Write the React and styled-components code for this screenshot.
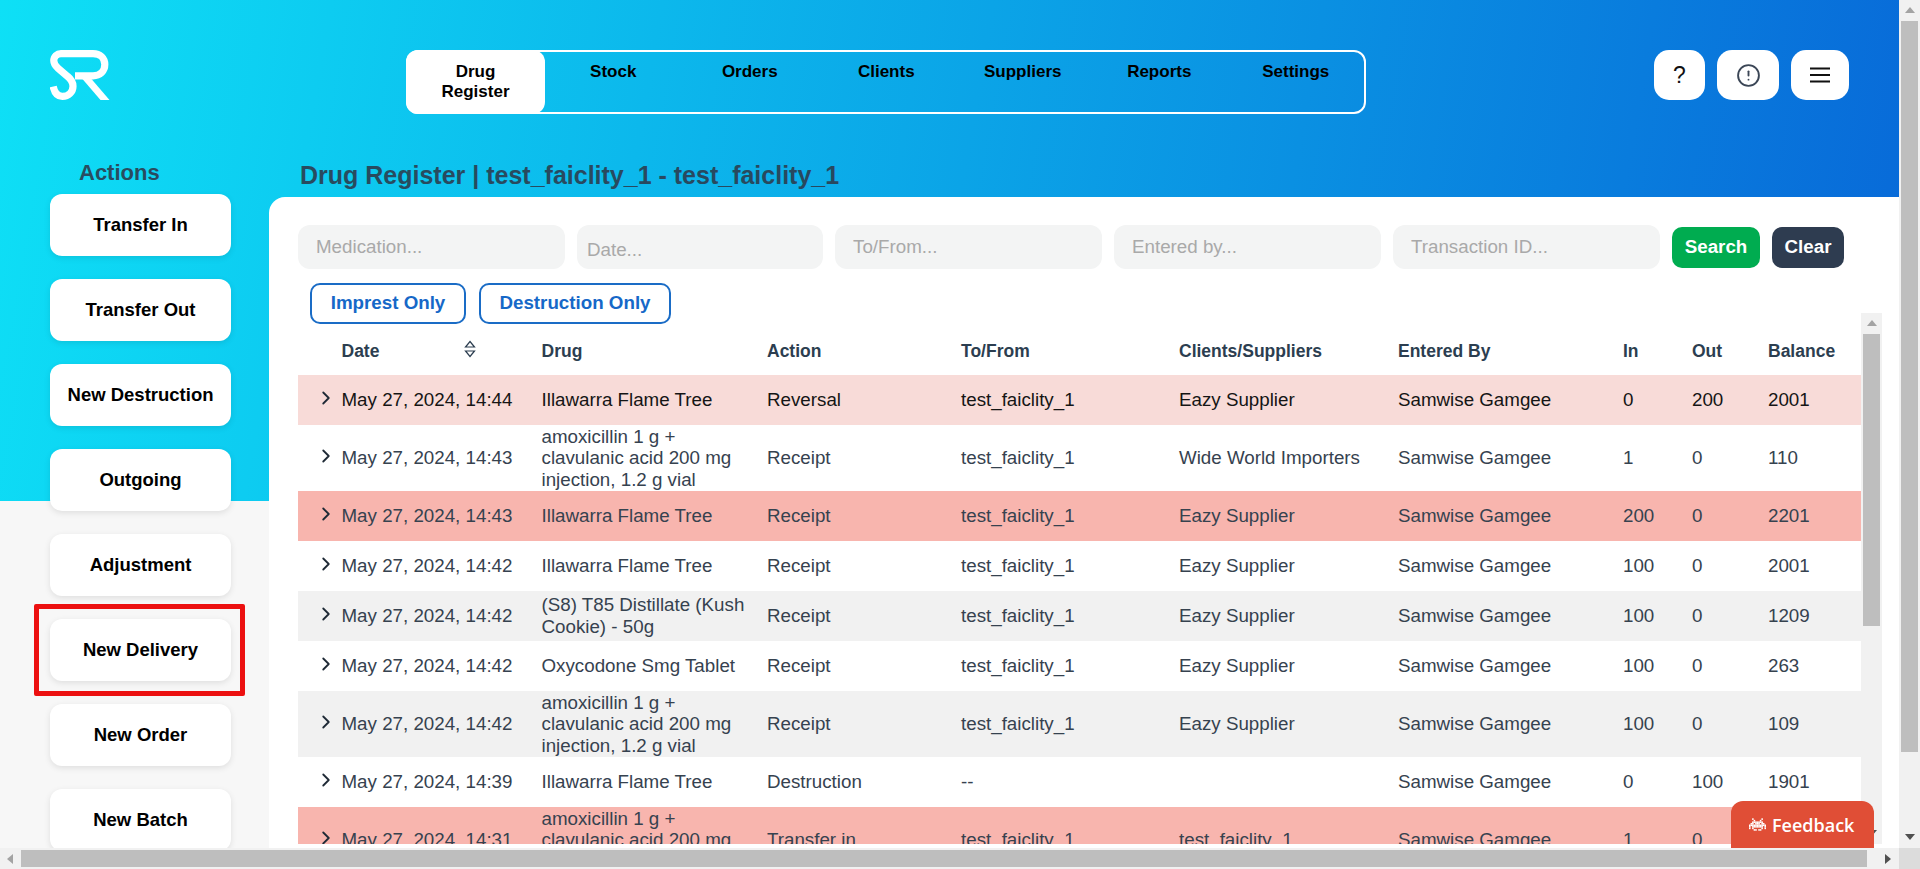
import React from 'react';
import styled, { createGlobalStyle } from 'styled-components';
import { ChevronRight, CircleAlert } from 'lucide-react';

const GlobalStyle = createGlobalStyle`
  html, body {
    margin: 0;
    height: 100%;
    overflow: hidden;
  }
  * {
    box-sizing: border-box;
  }
  body {
    font-family: "Liberation Sans", Arial, sans-serif;
  }
`;

const NAV_ITEMS = ['Drug Register', 'Stock', 'Orders', 'Clients', 'Suppliers', 'Reports', 'Settings'];

const ACTIONS = [
  'Transfer In',
  'Transfer Out',
  'New Destruction',
  'Outgoing',
  'Adjustment',
  'New Delivery',
  'New Order',
  'New Batch',
];

const AMOX = 'amoxicillin 1 g + clavulanic acid 200 mg injection, 1.2 g vial';
const FACILITY = 'test_faiclity_1';
const USER = 'Samwise Gamgee';

const ROWS = [
  ['soft', 'May 27, 2024, 14:44', 'Illawarra Flame Tree', 'Reversal', FACILITY, 'Eazy Supplier', USER, '0', '200', '2001'],
  ['plain', 'May 27, 2024, 14:43', AMOX, 'Receipt', FACILITY, 'Wide World Importers', USER, '1', '0', '110'],
  ['strong', 'May 27, 2024, 14:43', 'Illawarra Flame Tree', 'Receipt', FACILITY, 'Eazy Supplier', USER, '200', '0', '2201'],
  ['plain', 'May 27, 2024, 14:42', 'Illawarra Flame Tree', 'Receipt', FACILITY, 'Eazy Supplier', USER, '100', '0', '2001'],
  ['grey', 'May 27, 2024, 14:42', '(S8) T85 Distillate (Kush Cookie) - 50g', 'Receipt', FACILITY, 'Eazy Supplier', USER, '100', '0', '1209'],
  ['plain', 'May 27, 2024, 14:42', 'Oxycodone Smg Tablet', 'Receipt', FACILITY, 'Eazy Supplier', USER, '100', '0', '263'],
  ['grey', 'May 27, 2024, 14:42', AMOX, 'Receipt', FACILITY, 'Eazy Supplier', USER, '100', '0', '109'],
  ['plain', 'May 27, 2024, 14:39', 'Illawarra Flame Tree', 'Destruction', '--', '', USER, '0', '100', '1901'],
  ['strong', 'May 27, 2024, 14:31', AMOX, 'Transfer in', FACILITY, FACILITY, USER, '1', '0', '1801'],
];

const ROW_COLORS = {
  soft: '#f8dbd8',
  strong: '#f8b5ae',
  grey: '#f1f1f1',
  plain: '#ffffff',
};

const COLUMNS = '43.5px 200px 225.5px 194px 218px 219px 225px 69px 76px 93px';

const INVADER = [
  '..X.....X..',
  '...X...X...',
  '..XXXXXXX..',
  '.XX.XXX.XX.',
  'XXXXXXXXXXX',
  'X.XXXXXXX.X',
  'X.X.....X.X',
  '...XX.XX...',
];

const Logo = () => (
  <LogoMark viewBox="0 0 60 50" aria-label="SR">
    <path
      d="M3.2 36.6C4.6 43 8 46.4 12.3 46.4C18.6 46.4 23 42 23 36.3C23 32.3 21.2 29.3 17.6 26.4L8 18.2C5 15.6 3.8 13.2 3.8 10.8C3.8 6.4 7 3.6 11 3.6H43C50 3.6 54.8 8 54.8 14.6C54.8 21.2 50 25.8 43 25.8H25"
      fill="none"
      stroke="#fff"
      strokeWidth="7.2"
    />
    <path d="M29 25L38 25L59.5 50L50.5 50Z" fill="#fff" />
  </LogoMark>
);

const SortIcon = () => (
  <SortMark viewBox="0 0 14 18">
    <path d="M7 1.5L11.5 7H2.5Z" fill="none" stroke="#2c3e50" strokeWidth="1.2" />
    <path d="M7 16.5L11.5 11H2.5Z" fill="none" stroke="#2c3e50" strokeWidth="1.2" />
  </SortMark>
);

const MenuIcon = () => (
  <svg width="22" height="20" viewBox="0 0 22 20">
    <path d="M1 3.5H21M1 10H21M1 16.5H21" stroke="#111" strokeWidth="2.2" />
  </svg>
);

const InvaderIcon = () => (
  <InvaderMark viewBox="0 0 11 8">
    {INVADER.map((line, y) =>
      line.split('').map((cell, x) =>
        cell === 'X' ? <rect key={`${x}-${y}`} x={x} y={y} width="1.02" height="1.02" fill="#fff" /> : null
      )
    )}
  </InvaderMark>
);

const Arrow = ({ dir, color }) => {
  const points = {
    up: '0,7 5,1 10,7',
    down: '0,1 5,7 10,1',
    left: '7,0 1,5 7,10',
    right: '1,0 7,5 1,10',
  };
  return (
    <svg width="10" height="10" viewBox="0 0 10 10">
      <polygon points={points[dir]} fill={color} />
    </svg>
  );
};

const App = () => {
  return (
    <Page>
      <GlobalStyle />
      <Viewport>
        <Header>
          <LogoSlot>
            <Logo />
          </LogoSlot>
          <Nav>
            {NAV_ITEMS.map((item, idx) => (
              <NavItem key={item} $active={idx === 0}>
                {item}
              </NavItem>
            ))}
          </Nav>
          <HeaderButtons>
            <HeaderButton $width={51}>
              <QuestionMark>?</QuestionMark>
            </HeaderButton>
            <HeaderButton $width={62}>
              <CircleAlert size={25} color="#3b4656" strokeWidth={1.8} />
            </HeaderButton>
            <HeaderButton $width={58}>
              <MenuIcon />
            </HeaderButton>
          </HeaderButtons>
        </Header>

        <Body>
          <Sidebar>
            <SideTitle>Actions</SideTitle>
            {ACTIONS.map(action => (
              <ActionButton key={action} $marked={action === 'New Delivery'}>
                {action}
              </ActionButton>
            ))}
          </Sidebar>

          <Main>
            <PageTitle>Drug Register | test_faiclity_1 - test_faiclity_1</PageTitle>
            <Panel>
              <SearchRow>
                <SearchInput $width={267} placeholder="Medication..." />
                <DateInput placeholder="Date..." />
                <SearchInput $width={267} placeholder="To/From..." />
                <SearchInput $width={267} placeholder="Entered by..." />
                <SearchInput $width={267} placeholder="Transaction ID..." />
                <SolidButton $bg="#00ac50" $width={88}>
                  Search
                </SolidButton>
                <SolidButton $bg="#2e3c50" $width={72}>
                  Clear
                </SolidButton>
              </SearchRow>

              <ToggleRow>
                <OutlineButton $width={156}>Imprest Only</OutlineButton>
                <OutlineButton $width={192}>Destruction Only</OutlineButton>
              </ToggleRow>

              <TableArea>
                <Table>
                  <HeadRow>
                    <span />
                    <DateHead>
                      Date
                      <SortIcon />
                    </DateHead>
                    <span>Drug</span>
                    <span>Action</span>
                    <span>To/From</span>
                    <span>Clients/Suppliers</span>
                    <span>Entered By</span>
                    <span>In</span>
                    <span>Out</span>
                    <span>Balance</span>
                  </HeadRow>
                  {ROWS.map(([tone, ...cells], idx) => (
                    <Row key={idx} $tone={tone}>
                      <Expander>
                        <ChevronRight size={22} strokeWidth={2} />
                      </Expander>
                      {cells.map((cell, cellIdx) => (
                        <Cell key={cellIdx}>{cell}</Cell>
                      ))}
                    </Row>
                  ))}
                </Table>
                <VerticalBar>
                  <BarArrow>
                    <Arrow dir="up" color="#a3a3a3" />
                  </BarArrow>
                  <VerticalThumb $height={292} />
                  <BarSpacer />
                  <BarArrow>
                    <Arrow dir="down" color="#505050" />
                  </BarArrow>
                </VerticalBar>
              </TableArea>

              <FeedbackTab>
                <InvaderIcon />
                Feedback
              </FeedbackTab>
            </Panel>
          </Main>
        </Body>
      </Viewport>

      <VerticalBar>
        <BarArrow>
          <Arrow dir="up" color="#a3a3a3" />
        </BarArrow>
        <VerticalThumb $height={731} />
        <BarSpacer />
        <BarArrow>
          <Arrow dir="down" color="#505050" />
        </BarArrow>
      </VerticalBar>

      <HorizontalBar>
        <BarArrow>
          <Arrow dir="left" color="#a3a3a3" />
        </BarArrow>
        <HorizontalThumb $width={1846} />
        <BarSpacer />
        <BarArrow>
          <Arrow dir="right" color="#505050" />
        </BarArrow>
      </HorizontalBar>
      <BarCorner />
    </Page>
  );
};

export default App;

const Page = styled.div`
  display: grid;
  grid-template-columns: 1fr 21px;
  grid-template-rows: 1fr 21px;
  height: 100vh;
  overflow: hidden;
`;

const Viewport = styled.div`
  position: relative;
  min-height: 0;
  overflow: hidden;
  display: flex;
  flex-direction: column;
  background: linear-gradient(100deg, #0ee0f6, #0868d8) top / 100% 501px no-repeat, #f7f7f7;
`;

const Header = styled.header`
  display: flex;
  align-items: flex-start;
  height: 150px;
  padding: 50px 50px 0;
  flex: none;
`;

const LogoSlot = styled.div`
  width: 356px;
  flex: none;
`;

const LogoMark = styled.svg`
  display: block;
  width: 60px;
  height: 50px;
`;

const Nav = styled.nav`
  display: flex;
  width: 960px;
  height: 64px;
  border: 2px solid #fff;
  border-radius: 12px;
`;

const NavItem = styled.div`
  flex: ${p => (p.$active ? '0 0 139px' : '1')};
  padding: ${p => (p.$active ? '12px' : '10px')} 20px 0;
  margin: ${p => (p.$active ? '-2px 0 -2px -2px' : '0')};
  background: ${p => (p.$active ? '#fff' : 'transparent')};
  border-radius: 12px;
  color: #000;
  font-size: 17px;
  line-height: 20px;
  font-weight: 700;
  text-align: center;
`;

const HeaderButtons = styled.div`
  display: flex;
  gap: 12px;
  margin-left: auto;
`;

const HeaderButton = styled.button`
  display: flex;
  align-items: center;
  justify-content: center;
  width: ${p => p.$width}px;
  height: 50px;
  padding: 0;
  border: none;
  border-radius: 15px;
  background: #fff;
`;

const QuestionMark = styled.span`
  color: #111;
  font-family: "Liberation Sans", Arial, sans-serif;
  font-size: 23px;
`;

const Body = styled.div`
  display: grid;
  grid-template-columns: 269px 1fr;
  flex: 1;
  min-height: 0;
`;

const Sidebar = styled.aside`
  display: flex;
  flex-direction: column;
  gap: 23px;
  padding: 10px 38px 0 50px;
  overflow: hidden;
`;

const SideTitle = styled.h2`
  margin: 0 0 -15px 29px;
  height: 26px;
  color: #2c3e50;
  opacity: 0.9;
  font-size: 22px;
  line-height: 26px;
  font-weight: 700;
`;

const ActionButton = styled.button`
  position: relative;
  flex: none;
  height: 62px;
  padding: 0;
  border: none;
  border-radius: 12px;
  background: #fff;
  box-shadow: 0 2px 6px rgba(0, 0, 0, 0.1);
  color: #000;
  font-family: inherit;
  font-size: 18.5px;
  font-weight: 700;

  &::after {
    content: '';
    display: ${p => (p.$marked ? 'block' : 'none')};
    position: absolute;
    inset: -15px -14px -15px -16px;
    border: 5px solid #ec1010;
    border-radius: 2px;
  }
`;

const Main = styled.main`
  display: flex;
  flex-direction: column;
  min-width: 0;
  min-height: 0;
`;

const PageTitle = styled.h1`
  flex: none;
  margin: 0;
  height: 47px;
  padding: 11px 0 0 31px;
  color: #2c3e50;
  opacity: 0.9;
  font-size: 25px;
  line-height: 29px;
  font-weight: 700;
`;

const Panel = styled.section`
  display: flex;
  flex-direction: column;
  flex: 1;
  min-height: 0;
  padding: 28px 17px 4px 29px;
  background: #fff;
  border-radius: 16px 0 0 0;
`;

const SearchRow = styled.div`
  display: flex;
  align-items: center;
  gap: 12px;
  flex: none;
`;

const SearchInput = styled.input`
  width: ${p => p.$width}px;
  height: 44px;
  padding: 0 18px;
  border: none;
  border-radius: 12px;
  background: #f3f4f4;
  font-family: inherit;
  font-size: 18.75px;
  outline: none;

  &::placeholder {
    color: #a9a9a9;
    opacity: 1;
  }
`;

const DateInput = styled(SearchInput)`
  width: 246px;
  padding: 6px 10px 0;
`;

const SolidButton = styled.button`
  width: ${p => p.$width}px;
  height: 41px;
  padding: 0 0 1px;
  border: none;
  border-radius: 10px;
  background: ${p => p.$bg};
  color: #fff;
  font-family: inherit;
  font-size: 18.75px;
  font-weight: 700;
`;

const ToggleRow = styled.div`
  display: flex;
  gap: 13px;
  flex: none;
  margin: 14px 0 -11px 12px;
  position: relative;
  z-index: 1;
`;

const OutlineButton = styled.button`
  width: ${p => p.$width}px;
  height: 41px;
  padding: 0 0 2px;
  border: 2px solid #1a6cc6;
  border-radius: 10px;
  background: #fff;
  color: #1668c8;
  font-family: inherit;
  font-size: 18.75px;
  font-weight: 700;
`;

const TableArea = styled.div`
  display: flex;
  flex: 1;
  min-height: 0;
  overflow: hidden;
`;

const Table = styled.div`
  flex: 1;
  min-width: 0;
`;

const HeadRow = styled.div`
  display: grid;
  grid-template-columns: ${COLUMNS};
  align-items: center;
  height: 62px;
  padding-top: 14px;
  color: #2c3e50;
  font-size: 17.5px;
  font-weight: 700;
`;

const DateHead = styled.span`
  display: flex;
  align-items: center;
  gap: 84px;
`;

const SortMark = styled.svg`
  width: 14px;
  height: 18px;
  margin-top: -4px;
`;

const Row = styled.div`
  display: grid;
  grid-template-columns: ${COLUMNS};
  align-items: center;
  min-height: 50px;
  padding: 0.5px 0;
  background: ${p => ROW_COLORS[p.$tone]};
  color: ${p => (p.$tone === 'soft' ? '#151515' : '#36424f')};
  font-size: 18.75px;
  line-height: 21.67px;
`;

const Expander = styled.span`
  display: flex;
  padding-left: 17px;
  margin-top: -5px;
  color: #1f2a36;
`;

const Cell = styled.span`
  padding-right: 12px;
`;

const VerticalBar = styled.div`
  display: flex;
  flex-direction: column;
  flex: none;
  width: 21px;
  background: #f1f1f1;
`;

const HorizontalBar = styled.div`
  display: flex;
  height: 21px;
  background: #f1f1f1;
`;

const BarArrow = styled.div`
  display: flex;
  align-items: center;
  justify-content: center;
  flex: none;
  width: 21px;
  height: 21px;
`;

const BarSpacer = styled.div`
  flex: 1;
`;

const VerticalThumb = styled.div`
  flex: none;
  height: ${p => p.$height}px;
  margin: 0 2px;
  background: #bebebe;
`;

const HorizontalThumb = styled.div`
  flex: none;
  width: ${p => p.$width}px;
  margin: 2px 0;
  background: #bebebe;
`;

const BarCorner = styled.div`
  background: #dcdcdc;
`;

const FeedbackTab = styled.div`
  position: absolute;
  right: 25px;
  bottom: 0;
  display: flex;
  align-items: center;
  gap: 6px;
  width: 143px;
  height: 47px;
  padding-left: 18px;
  border-radius: 12px 12px 0 0;
  background: #e04e36;
  color: #fff;
  font-family: "Open Sans", sans-serif;
  font-size: 18px;
  font-weight: 600;
`;

const InvaderMark = styled.svg`
  width: 17px;
  height: 13px;
`;
